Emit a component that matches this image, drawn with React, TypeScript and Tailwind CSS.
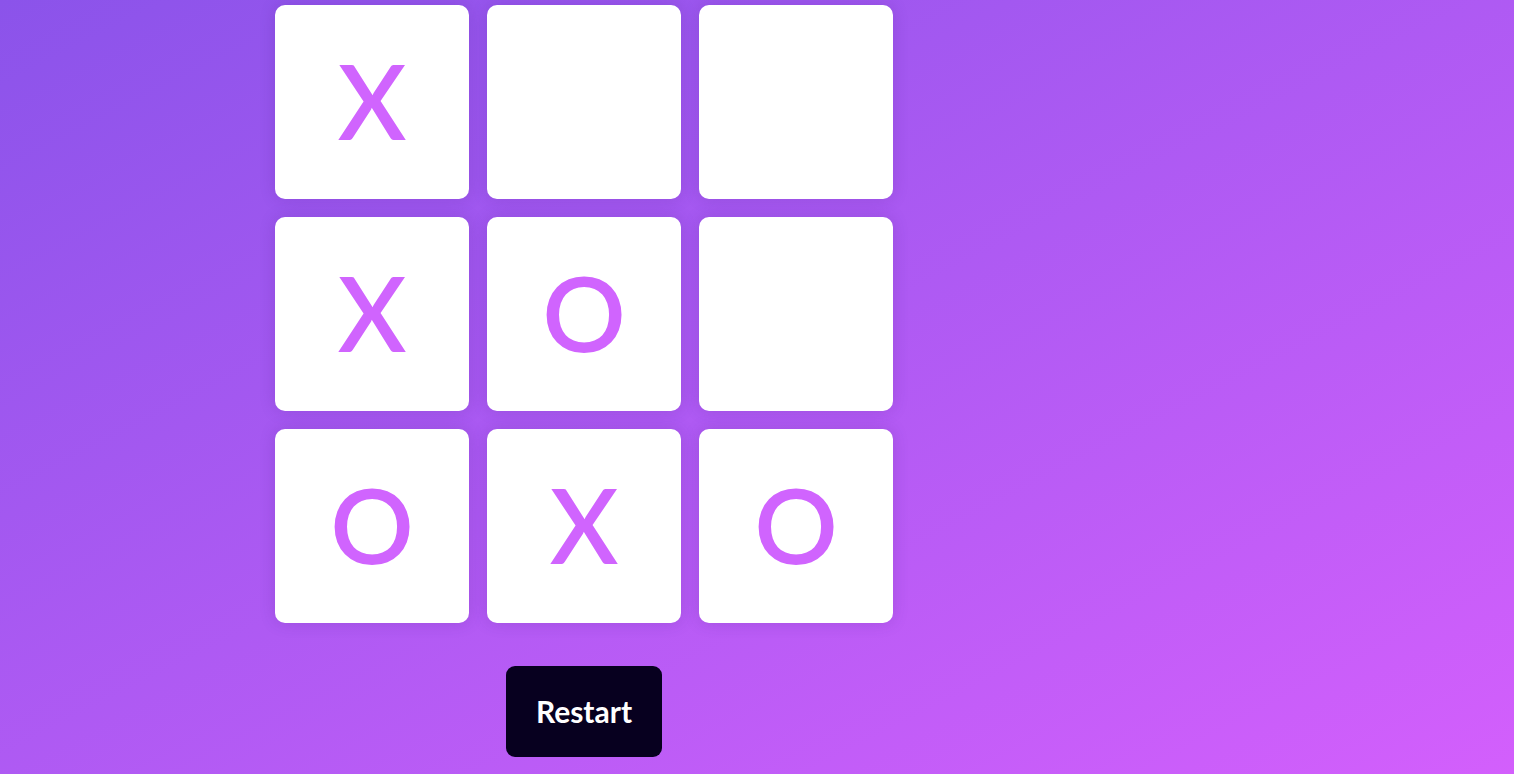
import React, { useState } from 'react';

type Cell = 'X' | 'O' | null;

const initial: Cell[] = ['X', null, null, 'X', 'O', null, 'O', 'X', 'O'];

export default function App() {
  const [board, setBoard] = useState<Cell[]>(initial);

  return (
    <div
      className="min-h-screen w-full bg-linear-to-br from-[#8b53ea] to-[#d35ffc] pl-[275px] pt-[5px]"
      style={{ fontFamily: 'Lato, "Open Sans", sans-serif' }}
    >
      <div className="flex w-[618px] flex-col items-center">
        <div className="grid grid-cols-3 gap-[18px]">
          {board.map((cell, i) => (
            <button
              key={i}
              className="flex h-[194px] w-[194px] items-center justify-center rounded-[10px] bg-white pb-[4px] text-[104px] font-semibold leading-none text-[#d064fe] shadow-[0_0_16px_rgba(60,20,120,0.18)]"
            >
              {cell}
            </button>
          ))}
        </div>
        <button
          onClick={() => setBoard(Array(9).fill(null))}
          className="mt-[43px] h-[91px] w-[156px] rounded-[9px] bg-[#07001f] text-[30px] font-bold text-white"
        >
          Restart
        </button>
      </div>
    </div>
  );
}
